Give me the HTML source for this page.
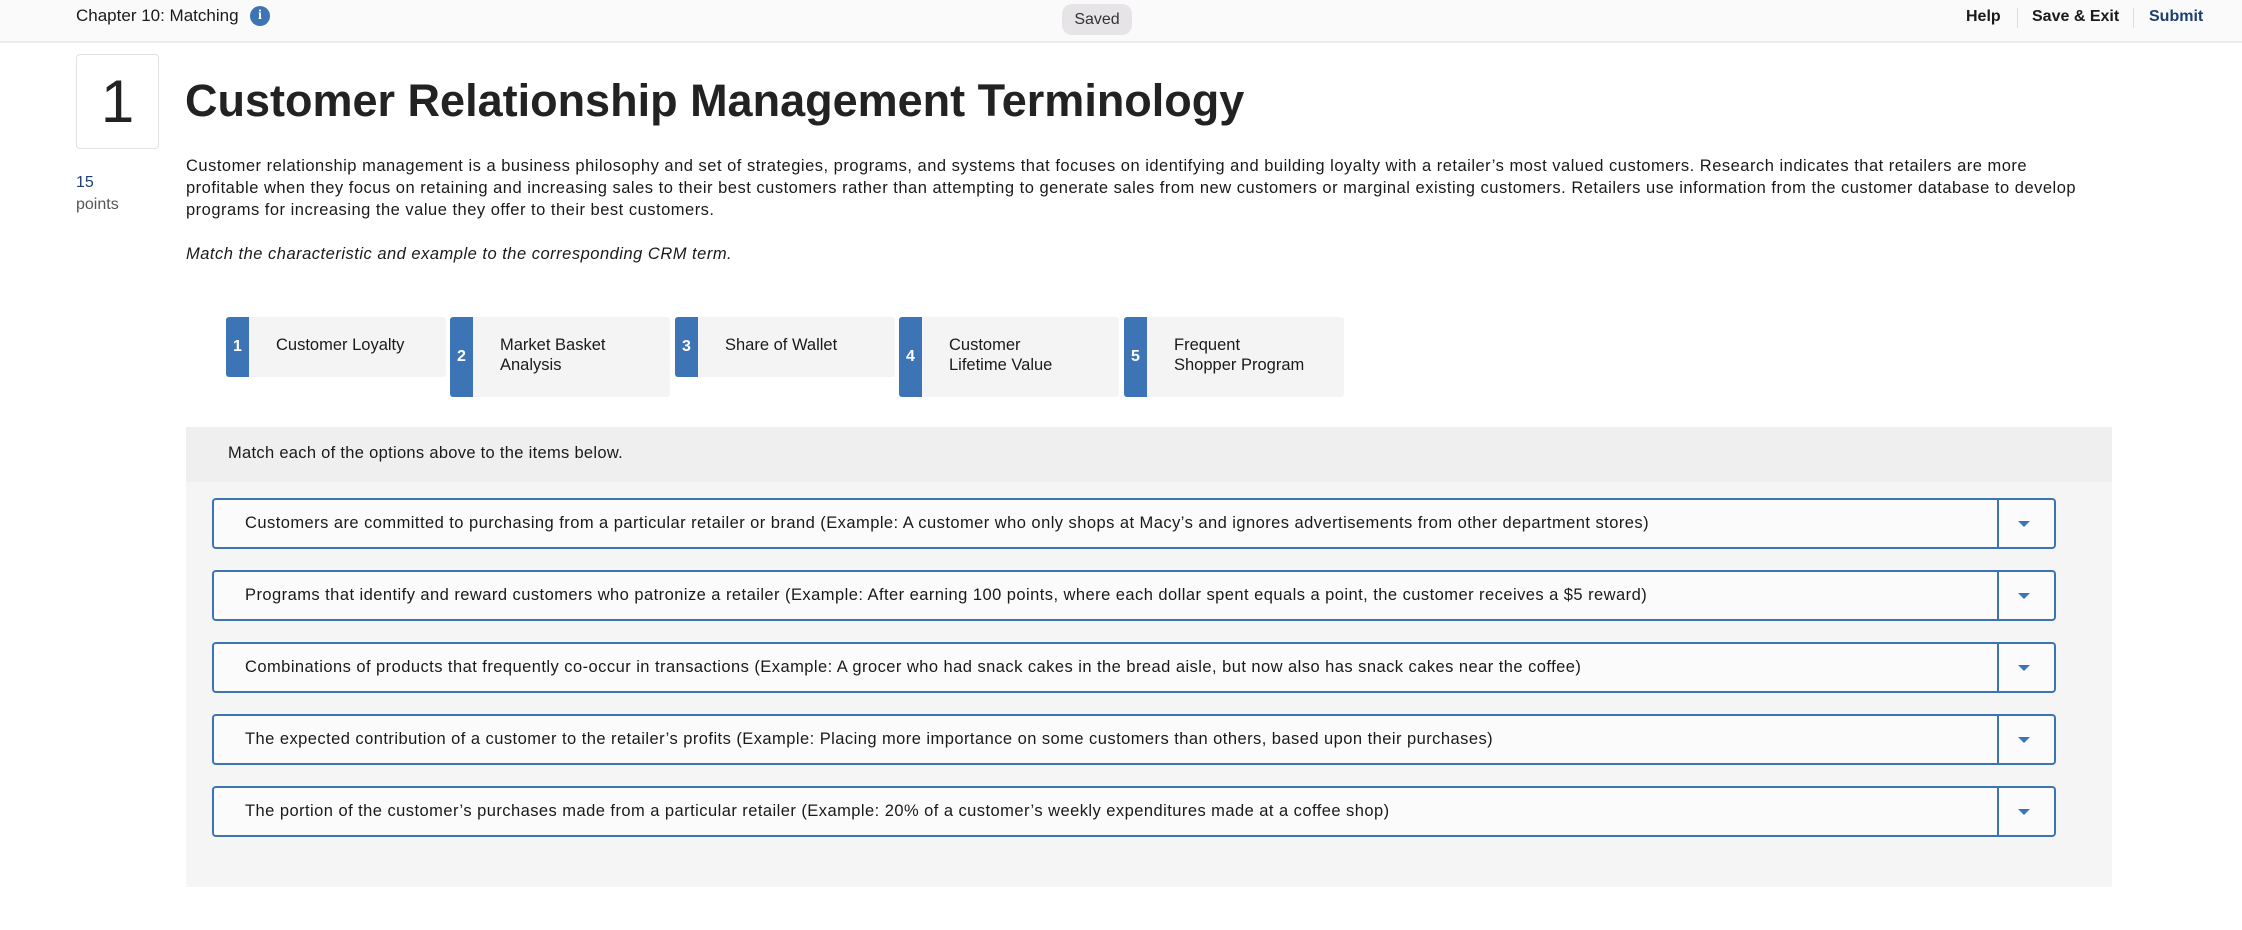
<!DOCTYPE html>
<html><head><meta charset="utf-8"><style>
*{box-sizing:border-box;margin:0;padding:0}
body{width:2242px;height:930px;background:#fff;font-family:"Liberation Sans",sans-serif;color:#1a1a1a;position:relative;overflow:hidden}
.abs{position:absolute;white-space:nowrap}
.hdr{position:absolute;left:0;top:0;width:2242px;height:43px;background:#fafafa;border-bottom:2px solid #ececec}
.card{position:absolute;top:317px;width:220px;background:#f4f4f4;border-radius:3px}
.card .n{position:absolute;left:0;top:0;bottom:0;width:23px;background:#3c74b6;color:#fff;font-weight:bold;font-size:16px;display:flex;align-items:center;justify-content:center;border-radius:3px 0 0 3px}
.card .t{position:absolute;left:50px;top:18px;font-size:16.5px;line-height:20px;white-space:nowrap}
.row{position:absolute;left:212px;width:1844px;height:51px;border:2px solid #3c74b6;border-radius:4px;background:#fbfbfb}
.row .t{position:absolute;left:31px;top:14px;font-size:16.5px;letter-spacing:0.45px;white-space:nowrap}
.row .d{position:absolute;left:1783px;top:0;bottom:0;width:2px;background:#3c74b6}
.row .a{position:absolute;left:1804px;top:21px;width:0;height:0;border-left:6px solid transparent;border-right:6px solid transparent;border-top:6px solid #3c74b6}
p.b{font-size:16.5px;line-height:22px;letter-spacing:0.5px}
</style></head><body>
<div class="hdr"></div>
<div class="abs" style="left:76px;top:6px;font-size:17px">Chapter 10: Matching</div>
<div class="abs" style="left:250px;top:6px;width:20px;height:20px;border-radius:50%;background:#3c74b6;color:#fff;font-weight:bold;font-size:14px;text-align:center;line-height:20px;font-family:'Liberation Serif',serif">i</div>
<div class="abs" style="left:1062px;top:4px;width:70px;height:31px;border-radius:10px;background:#e6e4e6;font-size:16px;text-align:center;line-height:31px;color:#333">Saved</div>
<div class="abs" style="left:1966px;top:8px;font-size:16px;font-weight:bold">Help</div>
<div class="abs" style="left:2017px;top:8px;width:1px;height:20px;background:#ddd"></div>
<div class="abs" style="left:2032px;top:8px;font-size:16px;font-weight:bold">Save &amp; Exit</div>
<div class="abs" style="left:2133px;top:8px;width:1px;height:20px;background:#ddd"></div>
<div class="abs" style="left:2149px;top:8px;font-size:16px;font-weight:bold;color:#1d3f6e">Submit</div>

<div class="abs" style="left:76px;top:54px;width:83px;height:95px;border:1px solid #e2e2e2;border-radius:4px;font-size:60px;text-align:center;line-height:93px;color:#222">1</div>
<div class="abs" style="left:185px;top:75px;font-size:45px;font-weight:bold;color:#222">Customer Relationship Management Terminology</div>
<div class="abs" style="left:76px;top:174px;font-size:16px;color:#1d3f6e">15</div>
<div class="abs" style="left:76px;top:196px;font-size:16px;color:#555">points</div>
<div class="abs" style="left:186px;top:155px">
<p class="b">Customer relationship management is a business philosophy and set of strategies, programs, and systems that focuses on identifying and building loyalty with a retailer’s most valued customers. Research indicates that retailers are more</p>
<p class="b">profitable when they focus on retaining and increasing sales to their best customers rather than attempting to generate sales from new customers or marginal existing customers. Retailers use information from the customer database to develop</p>
<p class="b">programs for increasing the value they offer to their best customers.</p>
<p class="b" style="margin-top:22px;font-style:italic">Match the characteristic and example to the corresponding CRM term.</p>
</div>

<div class="card" style="left:226px;height:60px"><div class="n">1</div><div class="t">Customer Loyalty</div></div>
<div class="card" style="left:450px;height:80px"><div class="n">2</div><div class="t">Market Basket<br>Analysis</div></div>
<div class="card" style="left:675px;height:60px"><div class="n">3</div><div class="t">Share of Wallet</div></div>
<div class="card" style="left:899px;height:80px"><div class="n">4</div><div class="t">Customer<br>Lifetime Value</div></div>
<div class="card" style="left:1124px;height:80px"><div class="n">5</div><div class="t">Frequent<br>Shopper Program</div></div>

<div class="abs" style="left:186px;top:427px;width:1926px;height:460px;background:#f5f5f5"></div>
<div class="abs" style="left:186px;top:427px;width:1926px;height:55px;background:#efefef"></div>
<div class="abs" style="left:228px;top:444px;font-size:16.5px;letter-spacing:0.3px">Match each of the options above to the items below.</div>

<div class="row" style="top:498px"><div class="t">Customers are committed to purchasing from a particular retailer or brand (Example: A customer who only shops at Macy’s and ignores advertisements from other department stores)</div><div class="d"></div><div class="a"></div></div>
<div class="row" style="top:570px"><div class="t">Programs that identify and reward customers who patronize a retailer (Example: After earning 100 points, where each dollar spent equals a point, the customer receives a $5 reward)</div><div class="d"></div><div class="a"></div></div>
<div class="row" style="top:642px"><div class="t">Combinations of products that frequently co-occur in transactions (Example: A grocer who had snack cakes in the bread aisle, but now also has snack cakes near the coffee)</div><div class="d"></div><div class="a"></div></div>
<div class="row" style="top:714px"><div class="t">The expected contribution of a customer to the retailer’s profits (Example: Placing more importance on some customers than others, based upon their purchases)</div><div class="d"></div><div class="a"></div></div>
<div class="row" style="top:786px"><div class="t">The portion of the customer’s purchases made from a particular retailer (Example: 20% of a customer’s weekly expenditures made at a coffee shop)</div><div class="d"></div><div class="a"></div></div>
</body></html>
